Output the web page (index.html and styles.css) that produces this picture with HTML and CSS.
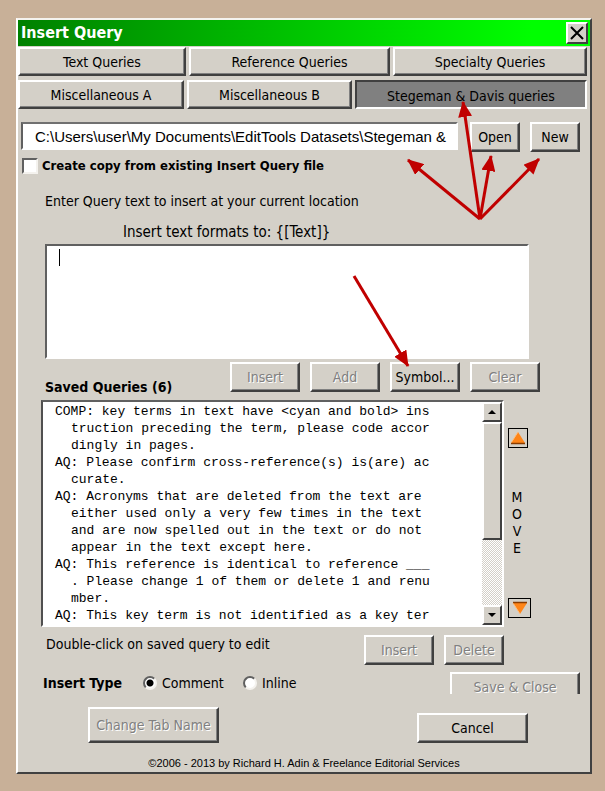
FILE: index.html
```html
<!DOCTYPE html>
<html lang="en">
<head>
    <meta charset="UTF-8">
    <title>Insert Query</title>
    <link rel="stylesheet" href="styles.css">
</head>
<body>
    <div class="dialog">
        <div class="title-bar">
            <h1>Insert Query</h1>
            <button class="close" aria-label="Close">
                <svg width="14" height="14" viewBox="0 0 14 14"><path d="M1 1L13 13M13 1L1 13" stroke="#000" stroke-width="2"/></svg>
            </button>
        </div>

        <div class="tabs tabs-top">
            <button>Text Queries</button>
            <button>Reference Queries</button>
            <button>Specialty Queries</button>
        </div>
        <div class="tabs tabs-bottom">
            <button>Miscellaneous A</button>
            <button>Miscellaneous B</button>
            <button class="active">Stegeman &amp; Davis queries</button>
        </div>

        <div class="file-row">
            <input type="text" class="file-path" aria-label="Query file" value="C:\Users\user\My Documents\EditTools Datasets\Stegeman &amp;">
            <button class="btn">Open</button>
            <button class="btn">New</button>
        </div>

        <div class="copy-row">
            <input type="checkbox" id="createCopy">
            <label for="createCopy">Create copy from existing Insert Query file</label>
        </div>

        <label class="prompt" for="queryText">Enter Query text to insert at your current location</label>
        <div class="format-note">Insert text formats to: {[Text]}</div>
        <div class="query-box">
            <textarea id="queryText"></textarea>
            <span class="caret"></span>
        </div>

        <div class="saved-head">
            <h2>Saved Queries (6)</h2>
            <div class="btn-group">
                <button class="btn" disabled>Insert</button>
                <button class="btn" disabled>Add</button>
                <button class="btn">Symbol...</button>
                <button class="btn" disabled>Clear</button>
            </div>
        </div>

        <div class="saved-row">
            <div class="list-box">
                <ul class="queries">
                    <li>COMP: key terms in text have &lt;cyan and bold&gt; ins<br>truction preceding the term, please code accor<br>dingly in pages.</li>
                    <li>AQ: Please confirm cross-reference(s) is(are) ac<br>curate.</li>
                    <li>AQ: Acronyms that are deleted from the text are<br>either used only a very few times in the text<br>and are now spelled out in the text or do not<br>appear in the text except here.</li>
                    <li>AQ: This reference is identical to reference ___<br>. Please change 1 of them or delete 1 and renu<br>mber.</li>
                    <li>AQ: This key term is not identified as a key ter</li>
                </ul>
                <div class="scrollbar">
                    <button aria-label="Scroll up"><svg width="8" height="4" viewBox="0 0 8 4"><path d="M0 4L4 0L8 4Z"/></svg></button>
                    <div class="thumb"></div>
                    <div class="track"></div>
                    <button aria-label="Scroll down"><svg width="8" height="4" viewBox="0 0 8 4"><path d="M0 0L4 4L8 0Z"/></svg></button>
                </div>
            </div>
            <div class="move">
                <button aria-label="Move up">
                    <svg width="16" height="14" viewBox="0 0 16 14"><path d="M8 1L15 12H1Z" fill="#ff8518"/><path d="M8 1L1 12" stroke="#ffc080"/><path d="M1 12.5H15" stroke="#8a3c00" stroke-width="1.5"/></svg>
                </button>
                <div class="move-label"><span>M</span><span>O</span><span>V</span><span>E</span></div>
                <button class="down" aria-label="Move down">
                    <svg width="16" height="14" viewBox="0 0 16 14"><path d="M1 2H15L8 13Z" fill="#ff8518"/><path d="M1 2L8 13" stroke="#ffc080"/><path d="M1 1.5H15" stroke="#8a3c00" stroke-width="1.5"/></svg>
                </button>
            </div>
        </div>

        <div class="edit-row">
            <span>Double-click on saved query to edit</span>
            <div class="btn-group">
                <button class="btn" disabled>Insert</button>
                <button class="btn btn-delete" disabled>Delete</button>
            </div>
        </div>

        <div class="type-row">
            <h2>Insert Type</h2>
            <input type="radio" name="type" id="typeComment" checked>
            <label for="typeComment">Comment</label>
            <input type="radio" name="type" id="typeInline">
            <label for="typeInline">Inline</label>
            <button class="btn btn-save" disabled>Save &amp; Close</button>
        </div>

        <div class="bottom-row">
            <button class="btn btn-rename" disabled>Change Tab Name</button>
            <button class="btn btn-cancel">Cancel</button>
        </div>

        <div class="copyright">©2006 - 2013 by Richard H. Adin &amp; Freelance Editorial Services</div>

        <!-- callout arrows -->
        <svg class="arrows" width="572" height="752" viewBox="18 20 572 752">
            <defs>
                <marker id="head" markerUnits="userSpaceOnUse" markerWidth="16" markerHeight="14" refX="15" refY="7" orient="auto">
                    <path d="M0 0L16 7L0 14Z" fill="#c00000"/>
                </marker>
            </defs>
            <g stroke="#c00000" stroke-width="3">
                <path d="M480 219L463 102" marker-end="url(#head)"/>
                <path d="M480 219L408 160" marker-end="url(#head)"/>
                <path d="M480 219L491 156" marker-end="url(#head)"/>
                <path d="M480 219L539 159" marker-end="url(#head)"/>
                <path d="M354 276L408 366" marker-end="url(#head)"/>
            </g>
        </svg>
    </div>
</body>
</html>
```
FILE: styles.css
```css
* {
    box-sizing: border-box;
}
body {
    margin: 0;
    padding: 18px 13px 17px 16px;
    background-color: #c8b098;
    color: #000;
    font-family: "DejaVu Sans Condensed", "Noto Sans", sans-serif;
    font-size: 14px;
    line-height: 18px;
}
button {
    font: inherit;
    color: inherit;
    background-color: #d4d0c8;
    padding: 0;
    border: 2px solid;
    border-color: #fff #404040 #404040 #fff;
    white-space: nowrap;
}
h1, h2 {
    margin: 0;
    font-size: 14px;
}
h1 {
    font-size: 16px;
    color: #fff;
}
svg {
    display: block;
}
.dialog {
    position: relative;
    background-color: #d4d0c8;
    border: 2px solid;
    border-color: #f4f2ee #404040 #404040 #fff;
}
.title-bar {
    display: flex;
    align-items: center;
    justify-content: space-between;
    height: 26px;
    padding: 0 2px 0 3px;
    background: linear-gradient(to right, #008000, #00ff00 90%);
}
.close {
    display: flex;
    align-items: center;
    justify-content: center;
    width: 22px;
    height: 22px;
}
.tabs {
    display: grid;
    gap: 3px;
    margin: 1px 3px 0 0;
}
.tabs-top {
    grid-template-columns: 168fr 201fr 194fr;
}
.tabs-bottom {
    grid-template-columns: 166fr 165fr 232fr;
    margin-top: 4px;
}
.tabs button {
    height: 29px;
    box-shadow: inset -1px -1px #808080;
}
.tabs .active {
    background-color: #808080;
    border-color: #404040 #fff #fff #404040;
    padding-top: 2px;
    box-shadow: none;
}
.btn {
    width: 70px;
    height: 30px;
    box-shadow: inset -1px -1px #808080;
}
.btn:disabled {
    color: #808080;
    text-shadow: 1px 1px #fff;
}
.btn-group {
    display: flex;
    gap: 10px;
}
.file-row {
    display: flex;
    gap: 10px;
    margin: 13px 10px 0 3px;
}
.file-row .btn {
    width: 50px;
}
.file-path {
    flex: 1;
    min-width: 0;
    height: 28px;
    margin-right: 2px;
    padding: 0 0 0 12px;
    border: 2px solid;
    border-color: #707070 #fff #fff #606060;
    background-color: #fff;
    font-family: "Liberation Sans", Arial, sans-serif;
    font-size: 15px;
}
.copy-row {
    display: flex;
    align-items: center;
    gap: 4px;
    margin: 6px 0 0 4px;
    height: 16px;
    font-size: 13px;
    font-weight: bold;
}
.copy-row input {
    appearance: none;
    width: 16px;
    height: 16px;
    margin: 0;
    border: 2px solid;
    border-color: #606060 #f4f2ee #f4f2ee #606060;
    background-color: #fff;
}
.prompt {
    display: block;
    margin: 18px 0 0 27px;
}
.format-note {
    margin: 13px 0 0 105px;
    font-size: 15px;
}
.query-box {
    position: relative;
    margin: 3px 61px 0 27px;
}
.query-box textarea {
    display: block;
    width: 100%;
    height: 115px;
    resize: none;
    border: 2px solid;
    border-color: #606060 #fff #fff #606060;
    background-color: #fff;
}
.caret {
    position: absolute;
    left: 14px;
    top: 5px;
    width: 1px;
    height: 17px;
    background-color: #000;
}
.saved-head {
    display: flex;
    align-items: flex-end;
    justify-content: space-between;
    margin: 3px 50px 0 27px;
    height: 34px;
}
.saved-head .btn-group {
    align-self: flex-start;
}
.saved-row {
    display: flex;
    gap: 4px;
    margin: 4px 59px 0 23px;
}
.list-box {
    flex: 1;
    display: flex;
    justify-content: space-between;
    border: 2px solid;
    border-color: #606060 #fff #fff #505050;
    background-color: #fff;
}
.queries {
    list-style: none;
    margin: 0;
    padding: 1px 0 1px 28px;
    font-family: "Liberation Mono", "Courier New", monospace;
    font-size: 13px;
    line-height: 17px;
    white-space: nowrap;
}
.queries li {
    margin-left: -16px;
    padding-left: 16px;
    text-indent: -16px;
}
.scrollbar {
    display: flex;
    flex-direction: column;
    width: 20px;
}
.scrollbar button {
    display: flex;
    align-items: center;
    justify-content: center;
    height: 20px;
}
.thumb {
    height: 118px;
    background-color: #d4d0c8;
    border: 2px solid;
    border-color: #fff #404040 #404040 #fff;
}
.track {
    flex: 1;
    background: repeating-conic-gradient(#d4d0c8 0 25%, #fff 0 50%) 0 0 / 2px 2px;
}
.move {
    display: flex;
    flex-direction: column;
    justify-content: space-between;
    width: 23px;
    padding: 28px 0 9px;
}
.move button {
    display: flex;
    align-items: center;
    justify-content: center;
    width: 20px;
    height: 20px;
    border: 1px solid #000;
}
.move .down {
    width: 23px;
}
.move-label {
    display: flex;
    flex-direction: column;
    width: 18px;
    text-align: center;
    line-height: 17px;
}
.edit-row {
    display: flex;
    justify-content: space-between;
    margin: 8px 86px 0 28px;
}
.edit-row .btn-delete {
    width: 60px;
}
.type-row {
    display: flex;
    align-items: center;
    margin: 7px 10px 0 25px;
    height: 22px;
}
.type-row h2 {
    width: 100px;
}
.type-row input {
    appearance: none;
    width: 14px;
    height: 14px;
    margin: 0 5px 0 0;
    border: 2px solid;
    border-color: #606060 #f4f2ee #f4f2ee #606060;
    border-radius: 50%;
    background-color: #fff;
}
.type-row input:checked {
    background-image: radial-gradient(#000 3px, transparent 4px);
}
.type-row label {
    width: 81px;
}
.btn-save {
    width: 130px;
    height: 22px;
    margin-left: auto;
    padding-top: 6px;
    border-bottom: none;
    box-shadow: inset -1px 0 #808080;
    line-height: 14px;
}
.bottom-row {
    display: flex;
    justify-content: space-between;
    align-items: flex-end;
    margin: 13px 62px 0 70px;
}
.btn-rename {
    width: 131px;
    height: 36px;
}
.btn-cancel {
    width: 111px;
}
.copyright {
    margin-top: 12px;
    padding-bottom: 1px;
    text-align: center;
    font-family: "Liberation Sans", Arial, sans-serif;
    font-size: 11px;
    line-height: 16px;
}
.arrows {
    position: absolute;
    left: 0;
    top: 0;
    pointer-events: none;
}
```
